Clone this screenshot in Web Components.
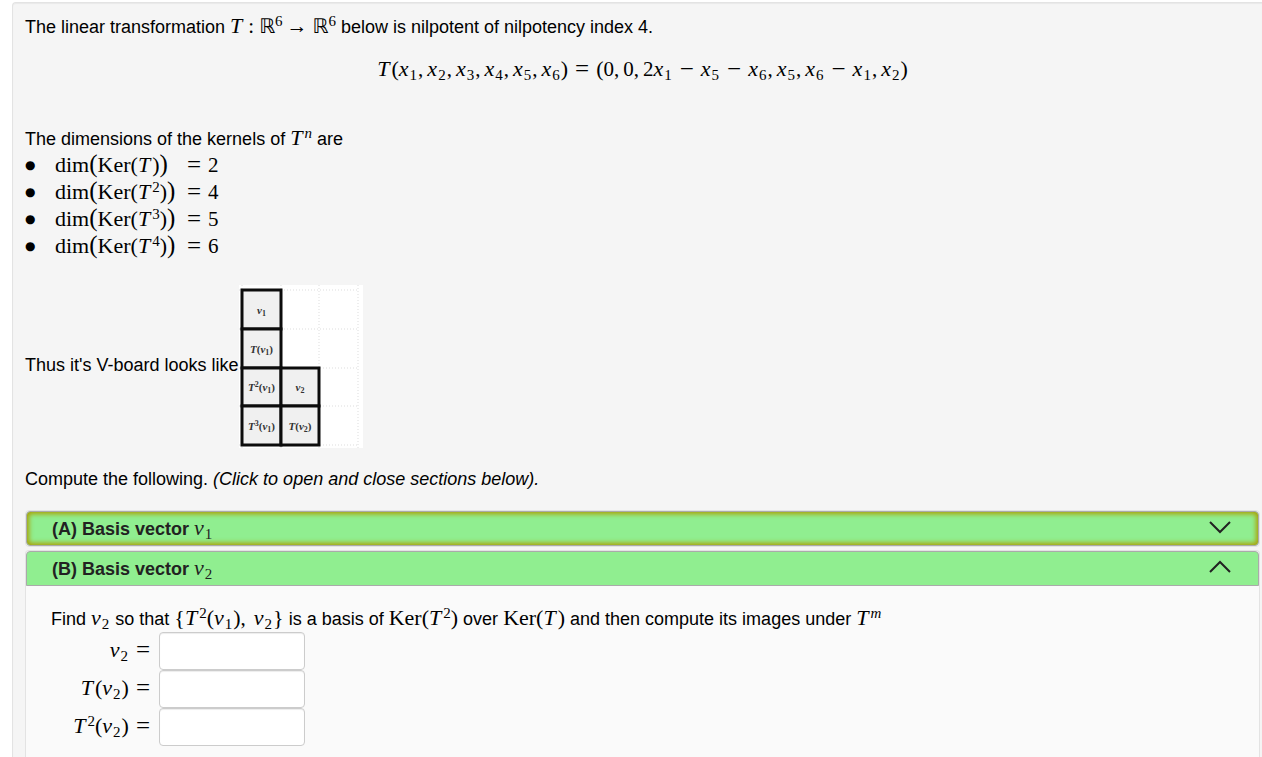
<!DOCTYPE html>
<html lang="en">
<head>
<meta charset="utf-8">
<title>Nilpotent transformation</title>
<style>
body { margin: 0; background: #fff; color: #000; font: 18px/26px "Liberation Sans", Arial, sans-serif; overflow-x: hidden; }
p { margin: 0; }
.display { margin: 17px 0 43px; text-align: center; }
.board { margin: 25px 0 18px; }
.intro { margin-bottom: 18px; }
</style>
</head>
<body>
<question-panel>
  <p>The linear transformation <math-expr src="T:R^6→R^6"></math-expr> below is nilpotent of nilpotency index 4.</p>
  <p class="display"><math-expr src="T(x_1,x_2,x_3,x_4,x_5,x_6)=(0,0,2x_1−x_5−x_6,x_5,x_6−x_1,x_2)"></math-expr></p>
  <p>The dimensions of the kernels of <math-expr src="T^n"></math-expr> are</p>
  <kernel-list></kernel-list>
  <p class="board">Thus it's V-board looks like<v-board></v-board></p>
  <p class="intro">Compute the following. <i>(Click to open and close sections below).</i></p>
  <fold-section active>
    <span slot="title">(A) Basis vector <math-expr src="v_1"></math-expr></span>
  </fold-section>
  <fold-section open>
    <span slot="title">(B) Basis vector <math-expr src="v_2"></math-expr></span>
    <p>Find <math-expr src="v_2"></math-expr> so that <math-expr src="{T^2(v_1),~v_2}"></math-expr> is a basis of <math-expr src="Ker(T^2)"></math-expr> over <math-expr src="Ker(T)"></math-expr> and then compute its images under <math-expr src="T^m"></math-expr></p>
    <answer-row src="v_2="></answer-row>
    <answer-row src="T(v_2)="></answer-row>
    <answer-row src="T^2(v_2)="></answer-row>
  </fold-section>
</question-panel>

<script>
// Inline formula. Letters are italic, _ and ^ set the next character as a
// subscript or superscript, [ ] are large parentheses and ~ is a wide space.
class MathExpr extends HTMLElement {
  constructor() {
    super();
    const tokens = this.getAttribute('src').match(/dim|Ker|[_^].|./g);
    const html = tokens.map(t => {
      if (t === 'dim' || t === 'Ker') return `<span class="fn">${t}</span>`;
      if (t[0] === '_') return `<sub>${t[1]}</sub>`;
      if (t[0] === '^') return `<sup>${t[1]}</sup>`.replace(/>([a-z])</, ' class="it">$1<');
      if (t === 'R') return '<span class="set">ℝ</span>';
      if (t === '[') return '<span class="big">(</span>';
      if (t === ']') return '<span class="big">)</span>';
      if (/[(){}]/.test(t)) return `<span class="paren">${t}</span>`;
      if (t === '~') return '<span class="space"></span>';
      if (t === ',') return '<span class="comma">,</span>';
      if (t === '=') return '<span class="rel">=</span>';
      if (/[→:]/.test(t)) return `<span class="map">${t}</span>`;
      if (t === '−') return '<span class="bin">−</span>';
      if (t === 'T') return '<i class="cap">T</i>';
      if (/[a-z]/.test(t)) return `<i>${t}</i>`;
      return t;
    }).join('');
    this.attachShadow({ mode: 'open' }).innerHTML = `<style>
      :host { display: inline; white-space: nowrap; font: 400 21px/1 "Liberation Serif", "DejaVu Sans", serif; }
      i { font-size: 22px; line-height: 0; margin-right: 1px; }
      sub, sup { font-size: 15px; line-height: 0; }
      sub { vertical-align: -4px; margin-right: 1px; }
      sup { vertical-align: 7px; }
      .it { font-style: italic; }
      .cap { margin-right: 2px; }
      .fn { font-size: 22px; line-height: 0; }
      .set { font: 20px/0 "DejaVu Sans", sans-serif; }
      .paren { font-size: 22px; line-height: 0; }
      .big { font-size: 25px; line-height: 0; }
      .space { padding-left: 4px; }
      .comma { margin-right: 4px; }
      .map { margin: 0 5px 0 4px; }
      .rel, .bin { font-size: 25px; line-height: 0; vertical-align: -1px; }
      .rel { margin: 0 7px; }
      .bin { margin: 0 7px; }
    </style>${html}`;
  }
}
customElements.define('math-expr', MathExpr);

class QuestionPanel extends HTMLElement {
  constructor() {
    super();
    this.attachShadow({ mode: 'open' }).innerHTML = `<style>
      :host { display: block; box-sizing: border-box; min-height: 755px; margin: 2px 0 0 12px; padding: 11px 2px 0 12px;
        background: #f5f5f5; border: 1px solid #e3e3e3; border-width: 1px 0 0 1px; border-radius: 4px 0 0 0;
        box-shadow: inset 0 1px 1px rgba(0,0,0,.05); }
    </style><slot></slot>`;
  }
}
customElements.define('question-panel', QuestionPanel);

class KernelList extends HTMLElement {
  constructor() {
    super();
    const rows = [['T', 2], ['T^2', 4], ['T^3', 5], ['T^4', 6]];
    this.attachShadow({ mode: 'open' }).innerHTML = `<style>
      :host { display: block; }
      ul { list-style: none; margin: 0; padding: 0; }
      li { display: grid; grid-template-columns: 30px 125px auto; height: 27px; align-items: center; line-height: 27px; }
      .dot { font: 12px/27px "DejaVu Sans", sans-serif; }
    </style><ul>${rows.map(([arg, dim]) => `<li><span class="dot">●</span><math-expr src="dim[Ker(${arg})]"></math-expr><math-expr src="=${dim}"></math-expr></li>`).join('')}</ul>`;
  }
}
customElements.define('kernel-list', KernelList);

class VBoard extends HTMLElement {
  constructor() {
    super();
    const xs = [3, 42, 80, 119], ys = [5, 44, 83, 121, 160];
    const cells = [[0, 0, 'v', '', 1], [0, 1, 'T', '', 1], [0, 2, 'T', 2, 1], [1, 2, 'v', '', 2], [0, 3, 'T', 3, 1], [1, 3, 'T', '', 2]];
    const grid = xs.map(x => `<path d="M${x} 0V163"/>`).join('') + ys.map(y => `<path d="M0 ${y}H119"/>`).join('');
    const boxes = cells.map(([c, r]) => `<rect x="${xs[c]}" y="${ys[r]}" width="${xs[c + 1] - xs[c]}" height="${ys[r + 1] - ys[r]}"/>`).join('');
    const labels = cells.map(([c, r, name, power, index]) => {
      const x = (xs[c] + xs[c + 1]) / 2, y = (ys[r] + ys[r + 1]) / 2 + 4;
      const sub = `<tspan class="s" dy="2">${index}</tspan>`;
      const inner = name === 'v' ? `<tspan class="i">v</tspan>${sub}`
        : `<tspan class="i">T</tspan>${power ? `<tspan class="s" dy="-4">${power}</tspan><tspan dy="4">(</tspan>` : '('}<tspan class="i">v</tspan>${sub}<tspan dy="-2">)</tspan>`;
      return `<text x="${x}" y="${y}">${inner}</text>`;
    }).join('');
    this.attachShadow({ mode: 'open' }).innerHTML = `<style>
      :host { display: inline-block; vertical-align: middle; }
      svg { display: block; background: #fff; }
      .grid { stroke: #ddd; stroke-dasharray: 1 2; fill: none; }
      rect { fill: #f0f0f0; stroke: #0c0c0c; stroke-width: 3; }
      text { font: bold 11px "Liberation Serif", serif; text-anchor: middle; fill: #333; }
      .i { font-style: italic; }
      .s { font-size: 8px; }
    </style><svg width="124" height="163" viewBox="0 0 124 163" role="img" aria-label="V-board"><g class="grid">${grid}</g>${boxes}${labels}</svg>`;
  }
}
customElements.define('v-board', VBoard);

class FoldSection extends HTMLElement {
  constructor() {
    super();
    const open = this.hasAttribute('open');
    this.attachShadow({ mode: 'open' }).innerHTML = `<style>
      :host { display: block; margin-bottom: 3px; border: 1px solid #e3e3e3; border-radius: 4px; background: #fafafa; }
      button { box-sizing: border-box; display: flex; align-items: center; justify-content: space-between; width: 100%; height: 35px;
        margin: 0; padding: 0 27px 0 25px; border: 1px solid #aaa; border-radius: 4px; background: #90ee90;
        color: #222; font: bold 18px/26px "Liberation Sans", Arial, sans-serif; text-align: left; }
      :host([active]) button { box-shadow: inset 0 0 5px 2px #aa9f00; outline: none; }
      :host([open]) button { border-radius: 4px 4px 0 0; }
      :host([open]) { border-bottom: 0; margin-bottom: 0; }
      .body { padding: 20px 25px 24px; }
      .body[hidden] { display: none; }
      svg { fill: none; stroke: #222; stroke-width: 2; margin-bottom: 4px; }
      :host([open]) path { transform: scaleY(-1); transform-origin: center; }
    </style>
    <button type="button" aria-expanded="${open}"><slot name="title"></slot><svg width="22" height="14" viewBox="0 0 22 14"><path d="M1 2L11 12L21 2"/></svg></button>
    <div class="body"${open ? '' : ' hidden'}><slot></slot></div>`;
    this.shadowRoot.querySelector('button').addEventListener('click', e => {
      const now = this.toggleAttribute('open');
      e.currentTarget.setAttribute('aria-expanded', now);
      this.shadowRoot.querySelector('.body').hidden = !now;
    });
  }
}
customElements.define('fold-section', FoldSection);

class AnswerRow extends HTMLElement {
  constructor() {
    super();
    this.attachShadow({ mode: 'open' }).innerHTML = `<style>
      :host { display: grid; grid-template-columns: 106px 146px; gap: 2px; align-items: center; }
      label { text-align: right; }
      input { box-sizing: border-box; width: 100%; height: 38px; margin: 0; padding: 4px 6px; border: 1px solid #ccc; border-radius: 4px;
        background: #fff; box-shadow: inset 0 1px 1px rgba(0,0,0,.075); font: 18px "Liberation Sans", Arial, sans-serif; }
    </style><label for="answer"><math-expr src="${this.getAttribute('src')}"></math-expr></label><input id="answer" type="text">`;
  }
}
customElements.define('answer-row', AnswerRow);
</script>
</body>
</html>
